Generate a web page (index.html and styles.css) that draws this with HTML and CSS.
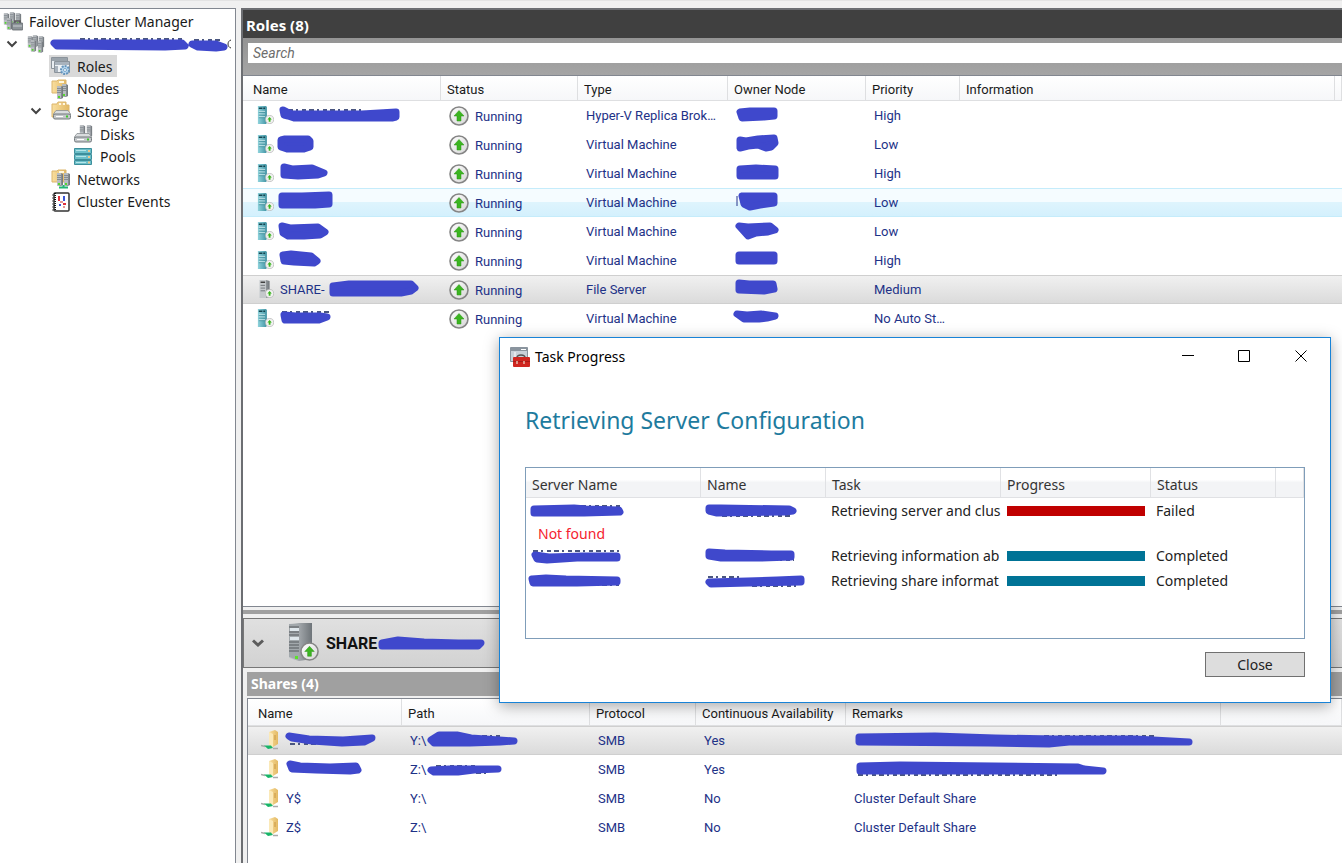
FILE: index.html
```html
<!DOCTYPE html>
<html lang="en">
<head>
<meta charset="utf-8">
<title>Failover Cluster Manager</title>
<link rel="stylesheet" href="styles.css">
</head>
<body>
<svg class="defs" aria-hidden="true">
  <defs>
    <linearGradient id="g-teal" x1="0" x2="1"><stop offset="0" stop-color="#8fd3dc"/><stop offset="1" stop-color="#4193a3"/></linearGradient>
    <linearGradient id="g-grey" x1="0" x2="1"><stop offset="0" stop-color="#c9cdd0"/><stop offset="1" stop-color="#6e7479"/></linearGradient>
    <linearGradient id="g-fold" x1="0" x2="1"><stop offset="0" stop-color="#f9dfa0"/><stop offset="1" stop-color="#e3b963"/></linearGradient>
    <linearGradient id="g-ring" x1="0" x2="1" y2="1"><stop offset="0" stop-color="#fff"/><stop offset="1" stop-color="#d5d5d5"/></linearGradient>
    <symbol id="tower" viewBox="0 0 8 14">
      <path d="M1 1h4l2 1v11l-2 1H1z" fill="url(#g-grey)"/><path d="M1 1h4v12H1z" fill="#b8bdc1"/>
      <path d="M1 3.500h4M1 5.500h4M1 7.500h4" stroke="#7b8186" stroke-width=".8"/><path d="M2 11h2v2H2z" fill="#55d62d"/>
    </symbol>
    <symbol id="cluster" viewBox="0 0 20 20">
      <use href="#tower" x="1" y="1" width="7" height="13"/><use href="#tower" x="12" y="1" width="7" height="13"/>
      <use href="#tower" x="6" y="0" width="7" height="13"/><use href="#tower" x="4" y="5" width="7" height="13"/><use href="#tower" x="11" y="6" width="7" height="13"/>
    </symbol>
    <symbol id="manager" viewBox="0 0 20 20">
      <use href="#tower" x="0" y="1" width="7" height="13"/><use href="#tower" x="6" y="0" width="7" height="13"/><use href="#tower" x="12" y="1" width="7" height="13"/><use href="#tower" x="3" y="6" width="7" height="13"/>
      <path d="M12 12v-2h5v2" fill="none" stroke="#555" stroke-width="1.500"/><rect x="9" y="12" width="11" height="7" rx="1" fill="#8d9499" stroke="#5f656a" stroke-width=".8"/><path d="M10 15h9" stroke="#c7ccd0"/>
    </symbol>
    <symbol id="roles" viewBox="0 0 20 20">
      <path d="M.5 1.500h16v11H.5z" fill="#e9eef2" stroke="#8b939b"/><path d="M1 2h15v3H1z" fill="#9aa3ab"/>
      <path d="M3.500 5.500h15v11h-15z" fill="#eef2f5" stroke="#8b939b"/><path d="M4 6h14v3H4zM4 10h3v6H4z" fill="#a9b3bd"/>
      <circle cx="14" cy="14" r="4" fill="#b9d8ef" stroke="#6594bb" stroke-width="2" stroke-dasharray="2 1"/><circle cx="14" cy="14" r="1.500" fill="#fff" stroke="#7aa5c8"/>
    </symbol>
    <symbol id="fold" viewBox="0 0 20 20"><path d="M1 3h5l1-2h8v3h3v12H1z" fill="url(#g-fold)" stroke="#dcb66c"/><path d="M8 3h6" stroke="#fff8e0" stroke-width="2"/><path d="M10 3h2" stroke="#d99a3c"/></symbol>
    <symbol id="nodes" viewBox="0 0 20 20"><path d="M1 2h5l1-1h8v13H1z" fill="url(#g-fold)" stroke="#dcb66c"/><path d="M8 3h5" stroke="#fff8e0" stroke-width="2"/><use href="#tower" x="10" y="4" width="8" height="14"/><use href="#tower" x="5" y="6" width="8" height="14"/></symbol>
    <symbol id="drive" viewBox="0 0 18 9"><path d="M3 0h12l3 4H0z" fill="#d9dcde" stroke="#8c9194" stroke-width=".8"/><rect x=".5" y="3.500" width="17" height="5" rx="1.500" fill="#c3c7ca" stroke="#73797d"/><path d="M3 6h7" stroke="#fff"/><path d="M13 5h2v2h-2z" fill="#3fc52c"/></symbol>
    <symbol id="storage" viewBox="0 0 20 20"><use href="#fold" width="20" height="20"/><use href="#drive" x="2" y="9" width="18" height="10"/></symbol>
    <symbol id="disks" viewBox="0 0 20 20"><use href="#tower" x="5" y="0" width="7" height="13"/><use href="#tower" x="12" y="0" width="7" height="13"/><use href="#drive" x="0" y="9" width="18" height="10"/></symbol>
    <symbol id="pools" viewBox="0 0 20 20"><path d="M.5 1.500h17v5H.5zM.5 7.500h17v5H.5zM.5 13.500h17v4H.5z" fill="#6dbfc9" stroke="#3d8f9c"/><path d="M2 3.500h10M2 9.500h10M2 15.500h10" stroke="#b5e6ea"/><path d="M14 4h2M14 10h2M14 15.500h2" stroke="#f0c88a" stroke-width="2"/></symbol>
    <symbol id="networks" viewBox="0 0 20 20"><path d="M1 2h5l1-1h8v12H1z" fill="url(#g-fold)" stroke="#dcb66c"/><path d="M8 3h5" stroke="#fff8e0" stroke-width="2"/><use href="#tower" x="5" y="3" width="8" height="14"/><use href="#tower" x="12" y="3" width="8" height="14"/><path d="M8 18.500h9M12.500 16v3" stroke="#22b573" stroke-width="2"/></symbol>
    <symbol id="events" viewBox="0 0 20 20"><rect x="3" y="1" width="15" height="18" rx="1" fill="#fff" stroke="#333" stroke-width="1.500"/><path d="M4 1v18" stroke="#111" stroke-width="2" stroke-dasharray="1 1"/><path d="M1 3h3M1 6h3M1 9h3M1 12h3M1 15h3M1 18h3" stroke="#555"/><path d="M7 4h2v5H7zM12 11h3v2h-3z" fill="#e0303c"/><path d="M12 4h2v5h-2zM8 12h2v2H8z" fill="#3b56d8"/><path d="M9 10h3M12 15h2" stroke="#c33"/></symbol>
    <symbol id="up" viewBox="0 0 20 20"><circle cx="10" cy="10" r="9" fill="url(#g-ring)" stroke="#858585" stroke-width="1.600"/><path d="M10 4.500l5 5.500h-3v5H8v-5H5z" fill="#3cb521" stroke="#2b9416" stroke-width=".5"/></symbol>
    <symbol id="up-small" viewBox="0 0 20 20"><circle cx="10" cy="10" r="9" fill="#f2f2f2" stroke="#b5b5b5" stroke-width="1.600"/><path d="M10 4.500l5 5.500h-3v5H8v-5H5z" fill="#3cb521"/></symbol>
    <symbol id="vm" viewBox="0 0 20 22"><path d="M1 1h9l1 1v18l-1 1H1z" fill="url(#g-teal)"/><path d="M2 3.500h7" stroke="#13444f" stroke-width="1.500" stroke-dasharray="4 1"/><path d="M2 7h7M2 10h7M2 13h7" stroke="#d9f3f5"/><path d="M2 8h7M2 11h7M2 14h7" stroke="#3f8b98" stroke-width=".8"/><use href="#up-small" x="9" y="11" width="10" height="10"/></symbol>
    <symbol id="fs" viewBox="0 0 20 22"><path d="M3 1h7l4 1v18l-4 1H3z" fill="url(#g-grey)"/><path d="M3 1h7v20H3z" fill="#c4c8cb"/><path d="M4 3.500h5" stroke="#333" stroke-width="1.500"/><path d="M4 7h5M4 10h5M4 13h5" stroke="#6e7377"/><use href="#up-small" x="9" y="11" width="10" height="10"/></symbol>
    <symbol id="big" viewBox="0 0 32 40"><path d="M1 1l10-1h13v36l-13 2-10-3z" fill="url(#g-grey)"/><path d="M1 1h10v36l-10-3z" fill="#a2a8ac"/><path d="M1 4h10M1 9h10M1 12h10M1 19h10M1 22h10M1 25h10M1 28h10" stroke="#54595d" stroke-width="1.200"/><path d="M2 6.500h9M2 15.500h9" stroke="#dfe7ec" stroke-width="3"/><path d="M7 33h3v3H7z" fill="#5be02c"/><use href="#up" x="12" y="19" width="19" height="19"/></symbol>
    <symbol id="share" viewBox="0 0 18 20"><path d="M8 2l6-2 3 2v12l-5 3-4-2z" fill="url(#g-fold)"/><path d="M8 2l4 2v13l-4-2z" fill="#fbe9b8"/><path d="M14 5v5" stroke="#c99642"/><path d="M0 15.500l4 1M12 18.500h5" stroke="#aaa" stroke-width="1.500"/><path d="M3 15.500h7l2 2.500-5 1z" fill="#18b569"/></symbol>
    <symbol id="task" viewBox="0 0 20 20"><path d="M.5.500h17v14H.5z" fill="#c9d1d9" stroke="#8a949e"/><path d="M1 1h16v3H1z" fill="#8a949e"/><path d="M11 2.500h5" stroke="#fff"/><path d="M5 5v9" stroke="#fff"/><path d="M7 11c0-4 8-4 8 0" fill="none" stroke="#555" stroke-width="1.500"/><rect x="3" y="10" width="17" height="10" rx="1" fill="#cf2620"/><path d="M3 14.500h17" stroke="#a81b17"/><path d="M7 14v3M14 14v3" stroke="#e8b9a9" stroke-width="1.500"/></symbol>
    <symbol id="chev" viewBox="0 0 12 8"><path d="M1.500 1.500L6 6l4.500-4.500" fill="none" stroke="currentColor" stroke-width="2"/></symbol>
    <symbol id="chev-bold" viewBox="0 0 12 8"><path d="M1 1.500L6 6l5-4.500" fill="none" stroke="currentColor" stroke-width="3"/></symbol>
  </defs>
</svg>

<div class="strip"></div>
<div class="frame">
  <aside class="tree-pane">
    <ul class="tree">
      <li class="lv0"><svg class="ti"><use href="#manager"/></svg><span>Failover Cluster Manager</span></li>
      <li class="lv1"><button class="tw" aria-label="Collapse cluster"><svg><use href="#chev"/></svg></button><svg class="ti"><use href="#cluster"/></svg>
        <svg class="mark wide" viewBox="0 0 182 18" aria-label="Hidden name"><path class="trace" d="M30 4h105M144 5h28"/><path d="M4 8l128 0 3 3-20 1-108-1zM142 9l12 0 12 0 8 3-8 1-18-1z"/><path d="M181 5c-4 1-4 7 0 8" fill="none" stroke="#333" stroke-width="1"/></svg></li>
      <li class="lv2"><span class="sel"><svg class="ti"><use href="#roles"/></svg><span>Roles</span></span></li>
      <li class="lv2"><svg class="ti"><use href="#nodes"/></svg><span>Nodes</span></li>
      <li class="lv2 open"><button class="tw" aria-label="Collapse Storage"><svg><use href="#chev"/></svg></button><svg class="ti"><use href="#storage"/></svg><span>Storage</span></li>
      <li class="lv3"><svg class="ti"><use href="#disks"/></svg><span>Disks</span></li>
      <li class="lv3"><svg class="ti"><use href="#pools"/></svg><span>Pools</span></li>
      <li class="lv2"><svg class="ti"><use href="#networks"/></svg><span>Networks</span></li>
      <li class="lv2"><svg class="ti"><use href="#events"/></svg><span>Cluster Events</span></li>
    </ul>
  </aside>

  <main class="work">
    <h1 class="title">Roles (8)</h1>
    <div class="search"><input type="text" placeholder="Search" aria-label="Search"></div>
    <div class="roles-wrap">
      <table class="grid roles">
        <colgroup><col class="r1"><col class="r2"><col class="r3"><col class="r4"><col class="r5"><col class="r6"><col></colgroup>
        <thead><tr><th>Name</th><th>Status</th><th>Type</th><th>Owner Node</th><th>Priority</th><th>Information</th><th></th></tr></thead>
        <tbody>
          <tr><td><div class="cell"><svg class="ri"><use href="#vm"/></svg><svg class="mark" viewBox="0 0 50 18"><path class="trace" d="M8 4h74"/><path d="M3 4l4 2 5 2h70l34-2v5l-4 1H14l-6-2-4-1z"/></svg></div></td><td><div class="cell st"><svg class="up"><use href="#up"/></svg><span>Running</span></div></td><td>Hyper-V Replica Brok…</td><td><svg class="mark" viewBox="0 0 50 18"><path d="M4 6l10-1h24v5l-10 1-22 1z"/></svg></td><td>High</td><td></td><td></td></tr>
          <tr><td><div class="cell"><svg class="ri"><use href="#vm"/></svg><svg class="mark" viewBox="0 0 50 18"><path d="M1 5l4-1h23l2 2v6l-6 2H7l-6-2z"/></svg></div></td><td><div class="cell st"><svg class="up"><use href="#up"/></svg><span>Running</span></div></td><td>Virtual Machine</td><td><svg class="mark" viewBox="0 0 50 18"><path d="M4 5l6 1 12-2 16-1 1 5-4 4-5 1-8-3-10 1-8 2z"/></svg></td><td>Low</td><td></td><td></td></tr>
          <tr><td><div class="cell"><svg class="ri"><use href="#vm"/></svg><svg class="mark" viewBox="0 0 50 18"><path d="M4 3l8 2 20-1 12 5-6 2-20 1-14-1z"/></svg></div></td><td><div class="cell st"><svg class="up"><use href="#up"/></svg><span>Running</span></div></td><td>Virtual Machine</td><td><svg class="mark" viewBox="0 0 50 18"><path d="M4 5l16-1 19 1v7l-14 0H4z"/></svg></td><td>High</td><td></td><td></td></tr>
          <tr class="hover"><td><div class="cell"><svg class="ri"><use href="#vm"/></svg><svg class="mark" viewBox="0 0 50 18"><path d="M2 3l20 0 27-1v9l-14 1H2z"/></svg></div></td><td><div class="cell st"><svg class="up"><use href="#up"/></svg><span>Running</span></div></td><td>Virtual Machine</td><td><svg class="mark" viewBox="0 0 50 18"><path d="M1 3v10" stroke="#26358a" stroke-width="1"/><path d="M6 3l7 0h25v7l-14 2-10 2-6-3z"/></svg></td><td>Low</td><td></td><td></td></tr>
          <tr><td><div class="cell"><svg class="ri"><use href="#vm"/></svg><svg class="mark" viewBox="0 0 50 18"><path d="M2 4l8 2 28-1 7 5-5 3-16 1-16 0-5-3z"/></svg></div></td><td><div class="cell st"><svg class="up"><use href="#up"/></svg><span>Running</span></div></td><td>Virtual Machine</td><td><svg class="mark" viewBox="0 0 50 18"><path d="M3 4l9 1 22-1 5 4-7 2-12 1-8 3z"/></svg></td><td>Low</td><td></td><td></td></tr>
          <tr><td><div class="cell"><svg class="ri"><use href="#vm"/></svg><svg class="mark" viewBox="0 0 50 18"><path d="M3 4l8-1 20 2 6 5-3 2-20-1-10-1z"/></svg></div></td><td><div class="cell st"><svg class="up"><use href="#up"/></svg><span>Running</span></div></td><td>Virtual Machine</td><td><svg class="mark" viewBox="0 0 50 18"><path d="M3 4h35v6H3z"/></svg></td><td>High</td><td></td><td></td></tr>
          <tr class="picked"><td><div class="cell"><svg class="ri"><use href="#fs"/></svg><span>SHARE-</span><svg class="mark" viewBox="0 0 50 18"><path d="M8 6l16-2 62 0 4 4-4 3-10 2H8z"/></svg></div></td><td><div class="cell st"><svg class="up"><use href="#up"/></svg><span>Running</span></div></td><td>File Server</td><td><svg class="mark" viewBox="0 0 50 18"><path d="M3 3l10 1 24 0 1 5-10 2-25-1z"/></svg></td><td>Medium</td><td></td><td></td></tr>
          <tr><td><div class="cell"><svg class="ri"><use href="#vm"/></svg><svg class="mark" viewBox="0 0 50 18"><path class="trace" d="M2 3h47"/><path d="M4 6l12 1 24 0 7 1-8 3-18 0-16 0z"/></svg></div></td><td><div class="cell st"><svg class="up"><use href="#up"/></svg><span>Running</span></div></td><td>Virtual Machine</td><td><svg class="mark" viewBox="0 0 50 18"><path d="M1 5l10 1 14-1 14 2-8 2-8 1H8z"/></svg></td><td>No Auto St…</td><td></td><td></td></tr>
        </tbody>
      </table>
    </div>

    <div class="splitter"></div>
    <section class="detail">
      <div class="banner">
        <button class="tw" aria-label="Collapse details"><svg><use href="#chev-bold"/></svg></button>
        <svg class="big"><use href="#big"/></svg>
        <h2>SHARE</h2>
        <svg class="mark" viewBox="0 0 50 18"><path class="trace" d="M56 14h48"/><path d="M5 9l16-3 26 2 34 1 23 0-3 3-40 0H5z"/></svg>
      </div>
      <div class="shares">
        <h2 class="shares-title">Shares (4)</h2>
        <div class="shares-wrap">
          <table class="grid share-grid">
            <colgroup><col class="s1"><col class="s2"><col class="s3"><col class="s4"><col class="s5"><col></colgroup>
            <thead><tr><th>Name</th><th>Path</th><th>Protocol</th><th>Continuous Availability</th><th>Remarks</th><th></th></tr></thead>
            <tbody>
              <tr class="picked"><td><div class="cell"><svg class="si"><use href="#share"/></svg><svg class="mark" viewBox="0 0 50 18"><path class="trace" d="M4 13h50"/><path d="M3 5l20 3 34 1 29-2-8 4-22 1-30-2-20-3z"/></svg></div></td><td><div class="cell"><span>Y:\</span><svg class="mark" viewBox="0 0 50 18"><path class="trace" d="M56 5h20"/><path d="M5 9l8-5h18l14 3 43 3-14 1-30 1H8z"/></svg></div></td><td>SMB</td><td>Yes</td><td><svg class="mark" viewBox="0 0 50 18"><path class="trace" d="M190 5h110"/><path d="M5 6l76-1 60 2 60 1h80l54 3-40 0-80 0-20 2-60-1-130-1z"/></svg></td><td></td></tr>
              <tr><td><div class="cell"><svg class="si"><use href="#share"/></svg><svg class="mark" viewBox="0 0 50 18"><path d="M4 4l10 2 30 1 26-1 2 4-8 1-34-1-24-1z"/></svg></div></td><td><div class="cell"><span>Z:\</span><svg class="mark" viewBox="0 0 50 18"><path class="trace" d="M10 6h40M50 13h14"/><path d="M5 10l18-1 49 0-24 1-16 2H8z"/></svg></div></td><td>SMB</td><td>Yes</td><td><svg class="mark" viewBox="0 0 50 18"><path class="trace" d="M4 15h200"/><path d="M6 6l40-1 178 2 6 2 19 2-26 0-80 0H6z"/></svg></td><td></td></tr>
              <tr><td><div class="cell"><svg class="si"><use href="#share"/></svg><span>Y$</span></div></td><td>Y:\</td><td>SMB</td><td>No</td><td>Cluster Default Share</td><td></td></tr>
              <tr><td><div class="cell"><svg class="si"><use href="#share"/></svg><span>Z$</span></div></td><td>Z:\</td><td>SMB</td><td>No</td><td>Cluster Default Share</td><td></td></tr>
            </tbody>
          </table>
        </div>
      </div>
    </section>
  </main>
</div>

<div class="dialog" role="dialog" aria-labelledby="dlg-title">
  <header class="caption">
    <svg class="ti"><use href="#task"/></svg><span id="dlg-title">Task Progress</span>
    <button aria-label="Minimize"><svg viewBox="0 0 13 13"><path d="M1 5.500h12"/></svg></button>
    <button aria-label="Maximize"><svg viewBox="0 0 13 13"><path d="M.5.500h11v11H.5z"/></svg></button>
    <button aria-label="Close window"><svg viewBox="0 0 13 13"><path d="M.5.500l11 11M11.500.500l-11 11"/></svg></button>
  </header>
  <div class="body">
    <h2>Retrieving Server Configuration</h2>
    <div class="tasks-wrap">
      <table class="tasks">
        <colgroup><col class="t1"><col class="t2"><col class="t3"><col class="t4"><col class="t5"><col></colgroup>
        <thead><tr><th>Server Name</th><th>Name</th><th>Task</th><th>Progress</th><th>Status</th><th></th></tr></thead>
        <tbody>
          <tr><td><svg class="mark" viewBox="0 0 50 18"><path class="trace" d="M50 4h40"/><path d="M3 7l40-1 12 1 33 1 1 2-36 1-50 0z"/></svg></td><td><svg class="mark" viewBox="0 0 50 18"><path class="trace" d="M16 14h70"/><path d="M3 6l12 0 68 1 4 2-8 1-68 1-8-2z"/></svg></td><td>Retrieving server and clus</td><td><div class="bar fail"></div></td><td>Failed</td><td></td></tr>
          <tr class="err"><td colspan="6">Not found</td></tr>
          <tr><td><svg class="mark" viewBox="0 0 50 18"><path class="trace" d="M2 4h86"/><path d="M4 8l14 2 34-1 34 0 0 2-40 0-30 2-10-1z"/></svg></td><td><svg class="mark" viewBox="0 0 50 18"><path class="trace" d="M66 13h22"/><path d="M3 5l16 1 46 1 20 0v3l-30 1-40 0-12-2z"/></svg></td><td>Retrieving information ab</td><td><div class="bar"></div></td><td>Completed</td><td></td></tr>
          <tr><td><svg class="mark" viewBox="0 0 50 18"><path class="trace" d="M50 13h38"/><path d="M1 7l14-1 20 1 51 1v2l-40 1-44 0z"/></svg></td><td><svg class="mark" viewBox="0 0 50 18"><path class="trace" d="M2 5h34M46 14h44"/><path d="M3 10l38-1 30-1 24-1 0 3-52 1-38 1z"/></svg></td><td>Retrieving share informat</td><td><div class="bar"></div></td><td>Completed</td><td></td></tr>
        </tbody>
      </table>
    </div>
    <button class="close">Close</button>
  </div>
</div>
</body>
</html>
```
FILE: styles.css
```css
* { box-sizing: border-box; }
body { margin: 0; height: 100vh; display: flex; flex-direction: column; overflow: hidden; position: relative; background: #f0f0f0; color: #1a1a1a; font-family: "Noto Sans", "Open Sans", sans-serif; font-size: 14px; }
h1, h2, ul { margin: 0; padding: 0; font-weight: normal; }
button { font: inherit; color: inherit; padding: 0; border: 0; background: none; }
svg { display: block; flex: none; }
.defs { position: absolute; width: 0; height: 0; }
.strip { flex: none; height: 8px; border-top: 1px solid #e3e3e3; }
.frame { flex: 1; display: flex; gap: 5px; min-height: 0; }

.mark { width: 50px; height: 18px; overflow: visible; fill: #3f48cc; stroke: #3f48cc; stroke-width: 7; stroke-linejoin: round; }
.mark.wide { width: 182px; }
.mark .trace { fill: none; stroke: #4a5680; stroke-width: 2; stroke-dasharray: 5 3 2 4 4 3; }

.tree-pane { flex: none; width: 236px; background: #fff; border: solid #828790; border-width: 1px 1px 0 0; overflow: hidden; }
.tree { list-style: none; height: 204px; padding-top: 1px; display: grid; grid-auto-rows: 1fr; }
.tree li { display: flex; align-items: center; gap: 6px; white-space: nowrap; }
.tree .lv0 { padding-left: 3px; }
.tree .lv1 { padding-left: 6px; gap: 4px; }
.lv2 { padding-left: 51px; }
.lv2.open { padding-left: 30px; }
.lv3 { padding-left: 74px; }
.ti { width: 20px; height: 20px; }
.tree .tw { width: 12px; height: 8px; color: #444; }
.tree .tw + .ti { margin-left: 3px; }
.tree .lv1 .ti { margin-left: 4px; }
.tw svg { width: 12px; height: 8px; }
.sel { display: flex; align-items: center; gap: 6px; height: 22px; margin-left: -2px; padding: 0 5px 0 2px; background: #d9d9d9; }

.work { flex: 1; min-width: 0; display: flex; flex-direction: column; border: solid #6c6e72; border-width: 2px 0 0 2px; }
.title { flex: none; height: 28px; padding-left: 3px; background: #404040; color: #fff; font-size: 15px; line-height: 30px; font-weight: bold; }
.search { flex: none; height: 37px; padding: 5px 0 12px 5px; background: linear-gradient(#949494, #a5a5a5); }
.search input { display: block; width: 100%; height: 20px; padding: 0 5px; border: 0; background: #fff; font: italic 14px Roboto, sans-serif; }
.search input::placeholder { color: #6d6d6d; opacity: 1; }

.grid, .tasks { width: 100%; table-layout: fixed; border-collapse: separate; border-spacing: 0; }
.grid { font-family: Roboto, "Liberation Sans", sans-serif; font-size: 13px; }
.grid th, .grid td { white-space: nowrap; text-align: left; }
.grid th { height: 25px; padding: 2px 0 0 6px; border: solid #dedfe1; border-width: 0 1px 1px 0; background: linear-gradient(#fff, #f6f7f9); color: #1a1a1a; font-weight: normal; }
.grid td { height: 29px; padding: 0 0 1px 8px; color: #1e3287; }
.roles-wrap { flex: 1; min-height: 0; background: #fff; border: solid #828790; border-width: 1px 0; }
.roles th:first-child { padding-left: 10px; }
.roles td:first-child { padding-left: 14px; }
.r1 { width: 198px; } .r2 { width: 137px; } .r3 { width: 150px; } .r4 { width: 138px; } .r5 { width: 94px; } .r6 { width: 375px; }
.cell { display: flex; align-items: center; }
.ri { width: 18px; height: 20px; margin-right: 5px; }
.roles .st { gap: 6px; padding-top: 2px; }
.up { width: 20px; height: 20px; }
.hover { background: linear-gradient(#f5fcff 50%, #def4fd 50%, #d3f0fd); }
.hover td { border: solid #c5ecfb; border-width: 1px 0; }
.picked { background: linear-gradient(#f1f1f1, #dadada); }
.picked td { border: solid #cfcfcf; border-width: 1px 0; }

.splitter { flex: none; height: 11px; border: solid #f0f0f0; border-width: 3px 0 4px; background: #a0a0a0; }
.detail { flex: none; background: #f0f0f0; }
.banner { height: 50px; display: flex; align-items: center; padding-left: 8px; border: 1px solid #777; border-right: 0; background: linear-gradient(#e0e0e0, #d2d2d2); }
.banner .tw { width: 12px; height: 8px; margin-right: 24px; color: #5c5c5c; }
.big { width: 32px; height: 40px; margin-right: 6px; }
.banner h2 { font: bold 16px Roboto, sans-serif; color: #111; }
.shares { padding: 4px 0 0 4px; }
.shares-title { height: 24px; margin-bottom: 2px; padding-left: 4px; background: #a0a0a0; color: #fff; font-size: 14px; line-height: 24px; font-weight: bold; }
.shares-wrap { padding-bottom: 21px; border: solid #828790; border-width: 1px 0 0 1px; background: #fff; }
.share-grid th { height: 27px; }
.share-grid th:first-child { padding-left: 10px; }
.share-grid td:first-child { padding-left: 13px; }
.s1 { width: 154px; } .s2 { width: 188px; } .s3 { width: 106px; } .s4 { width: 150px; } .s5 { width: 375px; }
.si { width: 18px; height: 20px; margin-right: 7px; }

.dialog { position: absolute; left: 499px; top: 337px; width: 832px; background: #fff; border: 1px solid #1883d7; box-shadow: 0 3px 14px rgba(0, 0, 0, .35); color: #222; }
.caption { display: flex; align-items: center; height: 37px; padding-left: 10px; color: #000; }
.caption span { flex: 1; margin-left: 5px; font-size: 14px; }
.caption button { width: 57px; height: 37px; display: grid; place-items: center; }
.caption button svg { width: 13px; height: 13px; fill: none; stroke: #000; }
.body { display: flex; flex-direction: column; padding: 28px 25px 25px; }
.body h2 { height: 36px; line-height: 34px; font-size: 23px; color: #1e7b9e; }
.tasks-wrap { height: 172px; margin: 28px 0 13px; border: 1px solid #7f9db9; }
.tasks th { height: 30px; padding: 4px 0 0 6px; border: solid #e0e1e4; border-width: 0 1px 1px 0; background: linear-gradient(#fff 40%, #f3f4f6 50%, #f3f4f6); color: #333; text-align: left; font-weight: normal; }
.tasks td { height: 25px; padding: 0 0 0 5px; white-space: nowrap; }
.tasks td:nth-child(4) { padding-left: 6px; }
.tasks .err td { height: 20px; padding-left: 12px; color: #f5222d; }
.t1 { width: 175px; } .t2 { width: 125px; } .t3 { width: 175px; } .t4 { width: 150px; } .t5 { width: 125px; }
.bar { width: 138px; height: 10px; background: #007396; }
.bar.fail { background: #c00000; }
.close { align-self: flex-end; width: 100px; height: 25px; border: 1px solid #707070; background: #ddd; }
```
